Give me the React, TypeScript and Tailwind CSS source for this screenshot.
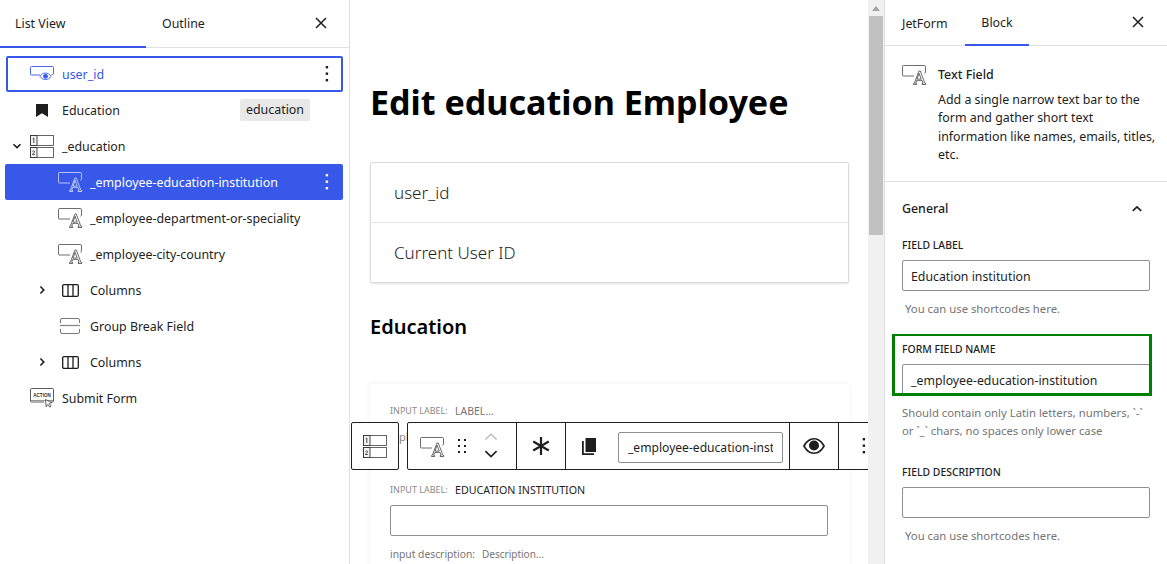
import React from "react";

function TextFieldIcon({ color = "#1e1e1e", className = "" }: { color?: string; className?: string }) {
  return (
    <svg viewBox="0 0 25 20" width="25" height="20" className={`shrink-0 ${className}`} fill="none" stroke={color} strokeWidth="0.65">
      <path d="M12 11H1.500A1 1 0 0 1 .5 10V1.500A1 1 0 0 1 1.500.5h21a1 1 0 0 1 1 1V7a1.500 1.500 0 0 1-1 1.300" />
      <path d="M11.500 19.500v-.9l.8-.2 4.600-12.400h1.400l4.600 12.400.9.200v.9h-3.700v-.9l1-.2-1-3h-5.400l-1 3 1 .2v.9z" />
      <path d="M15 14.100h4.200l-2.100-5.800z" />
    </svg>
  );
}

function GroupIcon() {
  return (
    <svg viewBox="0 0 24 23" width="24" height="23" fill="none" stroke="#555" strokeWidth="0.9" className="shrink-0">
      <rect x=".5" y=".5" width="23" height="10" fill="#fff" />
      <rect x=".5" y="12.500" width="23" height="10" fill="#fff" />
      <rect x=".5" y=".5" width="6.500" height="10" fill="#f3f3f3" stroke="#333" />
      <rect x=".5" y="12.500" width="6.500" height="10" fill="#f3f3f3" stroke="#333" />
      <path d="M2.700 3.800l1.100-.8v5" stroke="#222" strokeWidth=".8" />
      <path d="M2.500 16.500c.3-.9 2-.9 2 .2 0 .8-1.300 1.500-2 2.800h2.300" stroke="#222" strokeWidth=".8" />
    </svg>
  );
}

function EyeFieldIcon() {
  return (
    <svg viewBox="0 0 24 14" width="24" height="14" fill="none" stroke="#3858e9" strokeWidth="0.9" className="shrink-0">
      <path d="M10 9H1.500a1 1 0 0 1-1-1V1.500a1 1 0 0 1 1-1h21a1 1 0 0 1 1 1V7.500a1 1 0 0 1-1 1h-1" />
      <path d="M10 10.300c1.600-2.400 3.200-3.200 5.500-3.200s3.900.8 5.500 3.200c-1.600 2.400-3.200 3.200-5.500 3.200s-3.900-.8-5.500-3.200z" />
      <circle cx="15.500" cy="10.300" r="2" fill="#3858e9" />
    </svg>
  );
}

function Bookmark() {
  return (
    <svg viewBox="0 0 12 13" width="12" height="13" fill="#1e1e1e">
      <path d="M0 0h12v13L6 9.200 0 13z" />
    </svg>
  );
}

function Chevron({ dir, size = 10, color = "#1e1e1e", width = 1.6 }: { dir: "down" | "right" | "up"; size?: number; color?: string; width?: number }) {
  const d = dir === "down" ? "M1.500 3.200 5 6.600l3.500-3.400" : dir === "up" ? "M1.500 6.600 5 3.200l3.500 3.400" : "M3.400 1.500 6.800 5 3.400 8.500";
  return (
    <svg viewBox="0 0 10 10" width={size} height={size} fill="none" stroke={color} strokeWidth={width}>
      <path d={d} />
    </svg>
  );
}

function ColumnsIcon() {
  return (
    <svg viewBox="0 0 17 13" width="17" height="13" fill="none" stroke="#1e1e1e" strokeWidth="1.300">
      <rect x=".7" y=".7" width="15.600" height="11.600" rx="1.200" />
      <path d="M6 1v11M11 1v11" />
    </svg>
  );
}

function BreakIcon() {
  return (
    <svg viewBox="0 0 20 16" width="20" height="16" fill="none" stroke="#777" strokeWidth="1">
      <path d="M.5 5V2A1.500 1.500 0 0 1 2 .5h16A1.500 1.500 0 0 1 19.500 2v3M.5 11v3A1.500 1.500 0 0 0 2 15.500h16a1.500 1.500 0 0 0 1.500-1.500v-3" />
      <path d="M0 7.500h20" stroke="#888" strokeWidth="1.300" />
    </svg>
  );
}

function ActionIcon() {
  return (
    <svg viewBox="0 0 24 20" width="24" height="20" fill="none">
      <path d="M14 14H1.500a1 1 0 0 1-1-1V1.500a1 1 0 0 1 1-1h21a1 1 0 0 1 1 1V13a1 1 0 0 1-1 1h-1" stroke="#333" strokeWidth=".8" />
      <path d="M1 12.500h22" stroke="#999" strokeWidth="1" />
      <text x="12" y="8.500" textAnchor="middle" fontSize="4.600" fontWeight="700" fill="#333" fontFamily="'Liberation Sans', sans-serif">ACTION</text>
      <path d="M15.500 11.500l6.500 3-2.800 1 2 2.600-1.400 1-1.900-2.600-1.700 2.200z" fill="#fff" stroke="#333" strokeWidth=".8" />
    </svg>
  );
}

function Dots({ color = "#1e1e1e" }: { color?: string }) {
  return (
    <svg viewBox="0 0 4 16" width="4" height="16" fill={color}>
      <rect x=".7" y="0" width="2.400" height="2.400" />
      <rect x=".7" y="6.500" width="2.400" height="2.400" />
      <rect x=".7" y="13" width="2.400" height="2.400" />
    </svg>
  );
}

function Close() {
  return (
    <svg viewBox="0 0 12 12" width="12" height="12" fill="none" stroke="#1e1e1e" strokeWidth="1.500">
      <path d="M1 1l10 10M11 1 1 11" />
    </svg>
  );
}

type RowProps = {
  indent: number;
  icon: React.ReactNode;
  label: string;
  chevron?: "down" | "right";
};

function Row({ indent, icon, label, chevron }: RowProps) {
  return (
    <div className="relative flex h-9 items-center text-[#1e1e1e]" style={{ paddingLeft: indent }}>
      {chevron && (
        <span className="absolute flex w-[10px] justify-center" style={{ left: chevron === "down" ? 7 : 32 }}>
          <Chevron dir={chevron} />
        </span>
      )}
      <span className="flex w-6 items-center justify-center">{icon}</span>
      <span className="ml-[8px] pt-[2px]">{label}</span>
    </div>
  );
}

function Field({ label, value, help, helpClass = "pl-[3px]", className = "" }: { label: string; value: string; help: React.ReactNode; helpClass?: string; className?: string }) {
  return (
    <div className={className}>
      <div className="text-[10.4px] leading-[16px] font-medium text-[#1e1e1e]">{label}</div>
      <div className="mt-[7px] flex h-[31px] items-center rounded-[2px] border border-[#8c8f94] bg-white px-2 pt-[3px] text-[12.3px] text-[#1e1e1e]">{value}</div>
      <div className={`mt-[9px] text-[11.3px] leading-[18px] text-[#757575] ${helpClass}`}>{help}</div>
    </div>
  );
}

export default function App() {
  return (
    <div className="flex h-[564px] w-[1167px] overflow-hidden bg-white text-[12.4px] text-[#1e1e1e] [font-family:'Noto_Sans','Open_Sans',sans-serif]">
      {/* List view */}
      <aside className="flex w-[350px] shrink-0 flex-col border-r border-[#e0e0e0]">
        <div className="flex h-[48px] items-stretch border-b border-[#e0e0e0]">
          <div className="mb-[-1px] flex w-[146px] items-center border-b-2 border-[#3858e9] pl-[15px] pt-[2px]">List View</div>
          <div className="ml-[16px] flex items-center pt-[2px]">Outline</div>
          <div className="ml-auto mr-[22px] flex items-center pb-[2px]">
            <Close />
          </div>
        </div>
        <div className="pl-[5px] pr-[6px] pt-[8px]">
          <div className="relative ml-[1px] flex h-9 items-center rounded-[2px] border-2 border-[#3858e9] pl-[22px] text-[#3858e9]">
            <span className="flex w-6 items-center justify-center pb-[2px]"><EyeFieldIcon /></span>
            <span className="ml-[8px] pt-[2px]">user_id</span>
            <span className="absolute right-[12px]"><Dots /></span>
          </div>
          <div className="relative">
            <Row indent={25} icon={<Bookmark />} label="Education" />
            <span className="absolute right-[33px] top-[7px] rounded-[2px] bg-[#e8e8e8] px-[6px] pt-[1px] pb-[1px] leading-[20px]">education</span>
          </div>
          <Row indent={25} chevron="down" icon={<GroupIcon />} label="_education" />
          <div className="relative flex h-9 items-center rounded-[2px] bg-[#3858e9] pl-[53px] text-white">
            <span className="flex w-6 items-center justify-center"><TextFieldIcon color="#fff" /></span>
            <span className="ml-[8px] pt-[2px]">_employee-education-institution</span>
            <span className="absolute right-[14px]"><Dots color="#fff" /></span>
          </div>
          <Row indent={53} icon={<TextFieldIcon />} label="_employee-department-or-speciality" />
          <Row indent={53} icon={<TextFieldIcon />} label="_employee-city-country" />
          <Row indent={53} chevron="right" icon={<ColumnsIcon />} label="Columns" />
          <Row indent={53} icon={<BreakIcon />} label="Group Break Field" />
          <Row indent={53} chevron="right" icon={<ColumnsIcon />} label="Columns" />
          <Row indent={25} icon={<ActionIcon />} label="Submit Form" />
        </div>
      </aside>

      {/* Canvas */}
      <main className="relative min-w-0 flex-1 overflow-hidden pl-[20px] pr-[19px]">
        <h1 className="mt-[79px] text-[34.1px] leading-[46px] font-bold text-black">Edit education Employee</h1>
        <div className="mt-[37px] rounded-[2px] border border-[#dcdcdc] shadow-[0_1px_2px_rgba(0,0,0,0.12)]">
          <div className="flex h-[60px] items-center border-b border-[#e4e4e4] pl-[23px] text-[17px] font-light">user_id</div>
          <div className="flex h-[59px] items-center pl-[23px] text-[17px] font-light">Current User ID</div>
        </div>
        <h2 className="mt-[30px] text-[20px] leading-[28px] font-semibold text-black">Education</h2>
        <div className="mt-[43px] h-[200px] rounded-[2px] pl-[20px] pr-[21px] pt-[18px] shadow-[0_0_6px_rgba(0,0,0,0.06)]">
          <div className="flex items-center leading-[18px]">
            <span className="w-[65px] text-[9px] text-[#8a8a8a]">INPUT LABEL:</span>
            <span className="text-[10.5px] text-[#757575]">LABEL...</span>
          </div>
          <div className="mt-[8px] pl-[9px] text-[11px] leading-[18px] text-[#8a8a8a]">pl</div>
          <div className="mt-[35px] flex items-center leading-[18px]">
            <span className="w-[65px] text-[9px] text-[#8a8a8a]">INPUT LABEL:</span>
            <span className="text-[10.7px] text-[#1e1e1e]">EDUCATION INSTITUTION</span>
          </div>
          <div className="mt-[6px] h-[31px] rounded-[2px] border border-[#8c8f94]"></div>
          <div className="mt-[9px] flex items-center text-[10.3px] leading-[18px] text-[#757575]">
            <span className="w-[92px]">input description:</span>
            <span className="text-[10px]">Description...</span>
          </div>
        </div>

        {/* Floating block toolbar */}
        <div className="absolute left-[1px] top-[422px] flex h-[48px]">
          <div className="flex w-[48px] items-center justify-center rounded-[2px] border border-[#1e1e1e] bg-white"><GroupIcon /></div>
          <div className="ml-[8px] flex w-[480px] rounded-[2px] border border-[#1e1e1e] bg-white">
            <div className="flex w-[109px] items-center border-r border-[#1e1e1e] pl-[12px]">
              <TextFieldIcon className="mt-[2px]" />
              <svg viewBox="0 0 8 14" width="8" height="14" fill="#1e1e1e" className="ml-[13px]">
                <rect x="0" y="0" width="2" height="2" />
                <rect x="6" y="0" width="2" height="2" />
                <rect x="0" y="6" width="2" height="2" />
                <rect x="6" y="6" width="2" height="2" />
                <rect x="0" y="12" width="2" height="2" />
                <rect x="6" y="12" width="2" height="2" />
              </svg>
              <div className="mb-[2px] ml-[17px] flex flex-col items-center gap-[1px]">
                <Chevron dir="up" size={16} color="#b4b4b4" width={0.8} />
                <Chevron dir="down" size={16} width={1} />
              </div>
            </div>
            <div className="flex w-[49px] items-center justify-center border-r border-[#1e1e1e]">
              <svg viewBox="0 0 18 18" width="18" height="18" fill="none" stroke="#1e1e1e" strokeWidth="2.200">
                <path d="M9 0v18M1.200 4.500l15.600 9M16.800 4.500l-15.600 9" />
              </svg>
            </div>
            <div className="flex w-[224px] items-center border-r border-[#1e1e1e] pl-[16px]">
              <svg viewBox="0 0 14 17" width="14" height="17" fill="#1e1e1e">
                <path d="M3.500 0H14v14H3.500z" />
                <path d="M0 3h1.800v12.200H12V17H0z" />
              </svg>
              <input
                readOnly
                value="_employee-education-institution"
                className="ml-[22px] mt-[2px] h-[31px] w-[165px] rounded-[2px] border border-[#8c8f94] bg-white px-[9px] pt-[1px] text-[12.1px] text-[#1e1e1e] outline-none"
              />
            </div>
            <div className="flex w-[49px] items-center justify-center border-r border-[#1e1e1e]">
              <svg viewBox="0 0 22 16" width="22" height="16" fill="#1e1e1e">
                <path fillRule="evenodd" d="M11 0c4.600 0 8.500 3 11 8-2.500 5-6.400 8-11 8S2.500 13 0 8c2.500-5 6.400-8 11-8zM11 1.600C7.500 1.600 4.200 4 2 8c2.200 4 5.500 6.400 9 6.400s6.800-2.400 9-6.400c-2.200-4-5.500-6.400-9-6.400z" />
                <circle cx="11" cy="7.500" r="5" />
              </svg>
            </div>
            <div className="flex flex-1 items-center pl-[23px]"><Dots /></div>
          </div>
        </div>
      </main>

      {/* Scrollbar */}
      <div className="flex w-[17px] shrink-0 flex-col items-center border-r border-[#e0e0e0] bg-[#f1f1f1] pr-[1px]">
        <svg viewBox="0 0 8 5" width="8" height="5" className="mt-[6px]" fill="#a3a3a3"><path d="M4 0l4 5H0z" /></svg>
        <div className="mt-[5px] h-[219px] w-[14px] bg-[#c1c1c1]"></div>
      </div>

      {/* Settings sidebar */}
      <aside className="relative w-[282px] shrink-0">
        <div className="relative flex h-[46px] items-stretch border-b border-[#e0e0e0] pl-[17px]">
          <div className="flex w-[47px] items-center pt-[3px]">JetForm</div>
          <div className="mb-[-1px] ml-[16px] flex w-[64px] items-center justify-center border-b-2 border-[#3858e9] pt-[3px]">Block</div>
          <div className="ml-auto mr-[23px] flex items-center pb-[2px]"><Close /></div>
        </div>
        <div className="flex h-[136px] border-b border-[#e0e0e0] pl-[17px] pr-[5px] pt-[19px]">
          <TextFieldIcon />
          <div className="ml-[11px] pt-[1px]">
            <div className="leading-[18px] font-medium">Text Field</div>
            <p className="mt-[7px] leading-[18.3px]">
              Add a single narrow text bar to the<br />form and gather short text<br />information like names, emails, titles,<br />etc.
            </p>
          </div>
        </div>
        <div className="flex h-[52px] items-center justify-between pl-[17px] pr-[24px] pt-[1px] font-medium">
          <span className="pt-[2px]">General</span>
          <Chevron dir="up" size={12} width={1.400} />
        </div>
        <div className="flex flex-col pl-[17px] pr-[17px] pt-[3px]">
          <Field label="FIELD LABEL" value="Education institution" help="You can use shortcodes here." />
          <Field
            className="mt-[23px]"
            label="FORM FIELD NAME"
            value="_employee-education-institution"
            helpClass="pl-0"
            help={<>Should contain only Latin letters, numbers, `-` or `_` chars, no spaces only lower case</>}
          />
          <Field className="mt-[24px]" label="FIELD DESCRIPTION" value="" help="You can use shortcodes here." />
        </div>
        {/* Highlight annotation over the field */}
        <div className="absolute left-[7px] top-[334px] h-[62px] w-[260px] border-[3px] border-[#008000] [border-top-width:2px]"></div>
      </aside>
    </div>
  );
}
